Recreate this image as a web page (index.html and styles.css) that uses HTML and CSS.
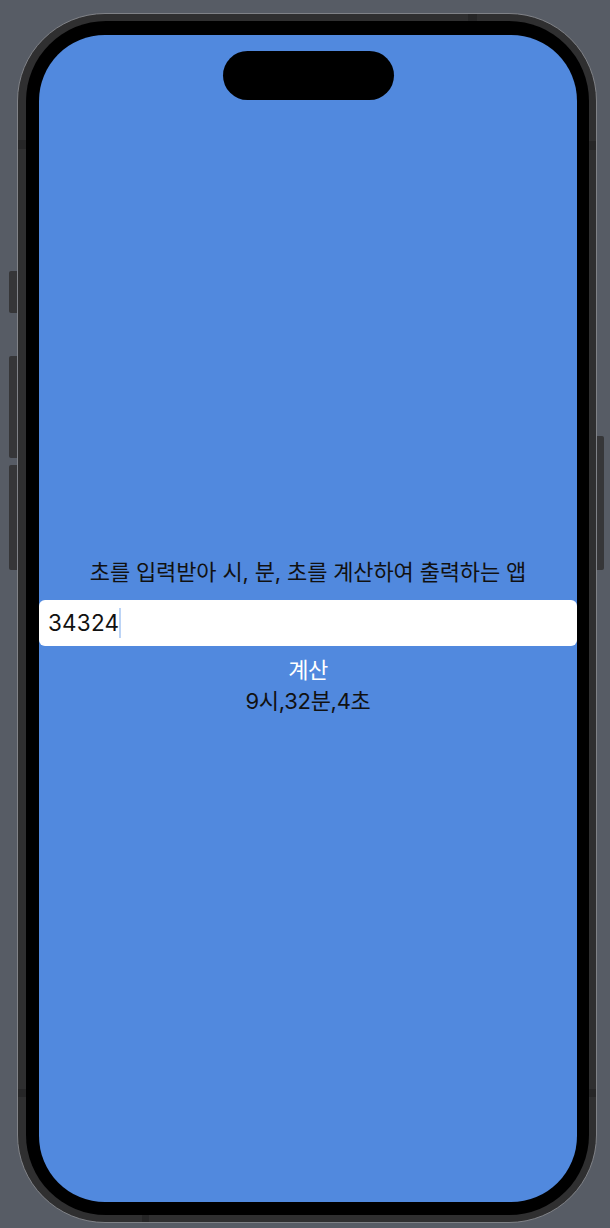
FILE: index.html
```html
<!DOCTYPE html>
<html lang="ko">
<head>
<meta charset="utf-8">
<title>초 계산기</title>
<link rel="stylesheet" href="styles.css">
</head>
<body>
  <div class="phone">
    <span class="btn btn-action"></span>
    <span class="btn btn-vol-up"></span>
    <span class="btn btn-vol-down"></span>
    <span class="btn btn-power"></span>
    <span class="antenna ant-top"></span>
    <span class="antenna ant-bottom"></span>
    <span class="antenna ant-lt"></span>
    <span class="antenna ant-rt"></span>
    <span class="antenna ant-lb"></span>
    <span class="antenna ant-rb"></span>
    <div class="bezel">
      <div class="screen">
        <div class="island"></div>
        <div class="content">
          <p class="title">초를 입력받아 시, 분, 초를 계산하여 출력하는 앱</p>
          <div class="field"><span class="field-text">34324</span><span class="caret"></span></div>
          <button class="calc">계산</button>
          <p class="result">9시,32분,4초</p>
        </div>
      </div>
    </div>
  </div>
</body>
</html>
```
FILE: styles.css
```css
html, body {
  margin: 0;
  padding: 0;
}
body {
  background: #575c65;
  width: 610px;
  height: 1228px;
  overflow: hidden;
  font-family: "Inter", "Noto Sans CJK KR", sans-serif;
}
.phone {
  position: relative;
  box-sizing: border-box;
  margin: 13px 0 0 17px;
  width: 580px;
  height: 1210px;
  border: 1px solid #808287;
  border-radius: 88px;
  background: #2f2f30;
  padding: 7px 7px 7px 8px;
}
.bezel {
  height: 100%;
  box-sizing: border-box;
  background: #000;
  border-radius: 80px;
  padding: 14px 12px 13px 13px;
}
.screen {
  position: relative;
  height: 100%;
  background: #5189de;
  border-radius: 66px;
  display: flex;
  flex-direction: column;
  justify-content: center;
  padding: 81px 0 46px;
  box-sizing: border-box;
}
.island {
  position: absolute;
  top: 16px;
  left: 50%;
  width: 171px;
  height: 49px;
  margin-left: -85px;
  background: #000;
  border-radius: 25px;
}
.content {
  display: flex;
  flex-direction: column;
  align-items: center;
}
.title {
  margin: 0;
  height: 30px;
  line-height: 30px;
  font-size: 22px;
  letter-spacing: -0.15px;
  color: #111;
  white-space: nowrap;
}
.field {
  align-self: stretch;
  margin-top: 13px;
  height: 46px;
  background: #fff;
  border-radius: 6px;
  display: flex;
  align-items: center;
  padding-left: 9px;
}
.field-text {
  font-size: 22.5px;
  letter-spacing: 0.2px;
  color: #111;
  line-height: 30px;
}
.caret {
  display: inline-block;
  width: 2px;
  height: 30px;
  margin-left: 0;
  background: #bcd4f6;
}
.calc {
  margin: 9px 0 0;
  padding: 0;
  border: 0;
  background: none;
  font-family: inherit;
  font-size: 22px;
  letter-spacing: -0.6px;
  line-height: 30px;
  height: 30px;
  color: #fff;
}
.result {
  margin: 1px 0 0;
  height: 30px;
  line-height: 30px;
  font-size: 22px;
  letter-spacing: -0.3px;
  color: #111;
}
.btn {
  position: absolute;
  background: #363638;
  width: 8px;
}
.btn-action { left: -9px; top: 257px; height: 42px; border-radius: 2px 0 0 2px; }
.btn-vol-up { left: -9px; top: 342px; height: 102px; border-radius: 2px 0 0 2px; }
.btn-vol-down { left: -9px; top: 451px; height: 105px; border-radius: 2px 0 0 2px; }
.btn-power { right: -8px; top: 422px; height: 134px; width: 7px; border-radius: 0 2px 2px 0; }
.antenna {
  position: absolute;
  background: #262627;
}
.ant-top { top: 0; left: 450px; width: 9px; height: 7px; }
.ant-bottom { bottom: 0; left: 124px; width: 7px; height: 7px; }
.ant-lt { left: 0; top: 126px; width: 8px; height: 9px; }
.ant-rt { right: 0; top: 127px; width: 7px; height: 9px; }
.ant-lb { left: 0; top: 1075px; width: 8px; height: 8px; }
.ant-rb { right: 0; top: 1075px; width: 7px; height: 8px; }
```
